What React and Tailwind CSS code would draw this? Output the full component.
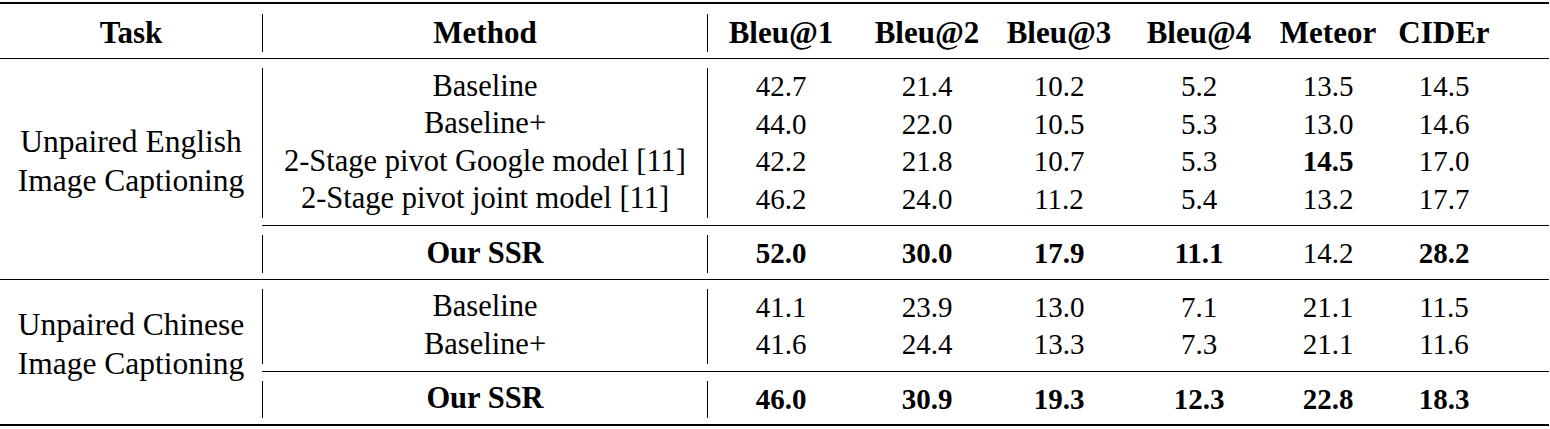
const cols = [
  { key: "b1", label: "Bleu@1", w: "w-[146px]" },
  { key: "b2", label: "Bleu@2", w: "w-[146px]" },
  { key: "b3", label: "Bleu@3", w: "w-[118px]" },
  { key: "b4", label: "Bleu@4", w: "w-[162px]" },
  { key: "me", label: "Meteor", w: "w-[96px]" },
  { key: "ci", label: "CIDEr", w: "w-[136px]" },
];

const english = [
  { method: "Baseline", vals: ["42.7", "21.4", "10.2", "5.2", "13.5", "14.5"] },
  { method: "Baseline+", vals: ["44.0", "22.0", "10.5", "5.3", "13.0", "14.6"] },
  { method: "2-Stage pivot Google model [11]", vals: ["42.2", "21.8", "10.7", "5.3", "14.5", "17.0"], bold: [4] },
  { method: "2-Stage pivot joint model [11]", vals: ["46.2", "24.0", "11.2", "5.4", "13.2", "17.7"] },
];
const englishOurs = { method: "Our SSR", vals: ["52.0", "30.0", "17.9", "11.1", "14.2", "28.2"], bold: [0, 1, 2, 3, 5], boldMethod: true };

const chinese = [
  { method: "Baseline", vals: ["41.1", "23.9", "13.0", "7.1", "21.1", "11.5"] },
  { method: "Baseline+", vals: ["41.6", "24.4", "13.3", "7.3", "21.1", "11.6"] },
];
const chineseOurs = { method: "Our SSR", vals: ["46.0", "30.9", "19.3", "12.3", "22.8", "18.3"], bold: [0, 1, 2, 3, 4, 5], boldMethod: true };

function Row({ row }) {
  return (
    <div className="flex items-center h-[37.5px] text-[29px]">
      {row.vals.map((v, i) => (
        <div key={i} className={`${cols[i].w} text-center ${row.bold && row.bold.includes(i) ? "font-bold" : ""}`}>
          {v}
        </div>
      ))}
    </div>
  );
}

function Block({ rows, pt, pb }) {
  return (
    <div className={`flex ${pt} ${pb}`}>
      <div className="w-[446px] border-x border-black flex flex-col text-[30.5px]">
        {rows.map((r, i) => (
          <div key={i} className={`h-[37.5px] flex items-center justify-center ${r.boldMethod ? "font-bold" : ""}`}>
            {r.method}
          </div>
        ))}
      </div>
      <div className="flex flex-col">
        {rows.map((r, i) => (
          <Row key={i} row={r} />
        ))}
      </div>
    </div>
  );
}

function Group({ task, rows, ours }) {
  return (
    <div className="flex">
      <div className="w-[262px] flex flex-col items-center justify-center pb-[16px] leading-[39px] text-[31.5px] text-center whitespace-nowrap">
        <span>{task[0]}</span>
        <span>{task[1]}</span>
      </div>
      <div className="flex-1 flex flex-col">
        <Block rows={rows} pt="pt-[9px]" pb="pb-[7px]" />
        <div className="h-px bg-black" />
        <Block rows={[ours]} pt="pt-[9px]" pb="pb-[6px]" />
      </div>
    </div>
  );
}

export default function App() {
  return (
    <div className="w-[1550px] h-[429px] bg-white text-black pt-[2px] font-['Liberation_Serif',serif]">
      <div className="w-[1549px]">
        <div className="h-[2px] bg-black" />
        {/* header */}
        <div className="flex pt-[10px] pb-[6px] font-bold text-[31px]">
          <div className="w-[262px] h-[38px] flex items-center justify-center">Task</div>
          <div className="w-[446px] h-[38px] border-x border-black flex items-center justify-center">Method</div>
          {cols.map((c) => (
            <div key={c.key} className={`${c.w} h-[38px] flex items-center justify-center whitespace-nowrap`}>
              {c.label}
            </div>
          ))}
        </div>
        <div className="h-px bg-black" />
        <Group task={["Unpaired English", "Image Captioning"]} rows={english} ours={englishOurs} />
        <div className="h-px bg-black" />
        <Group task={["Unpaired Chinese", "Image Captioning"]} rows={chinese} ours={chineseOurs} />
        <div className="h-[2px] bg-black" />
      </div>
    </div>
  );
}
